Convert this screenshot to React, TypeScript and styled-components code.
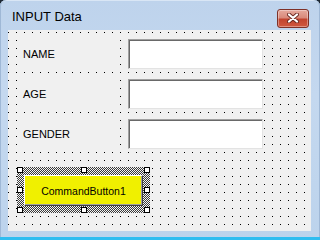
import { Fragment } from "react";
import styled, { createGlobalStyle } from "styled-components";

const GlobalStyle = createGlobalStyle`
  html, body {
    margin: 0;
    width: 320px;
    height: 240px;
    overflow: hidden;
    background: #1d2733;
  }
`;

const Window = styled.div`
  width: 320px;
  height: 240px;
  display: flex;
  flex-direction: column;
  border-radius: 6px 6px 0 0;
  background: linear-gradient(to bottom, #bed3ec 0%, #c4d8ef 40%, #bcd3ec 100%);
  box-shadow: inset 1px 0 #9fb8d6, inset -1px 0 #9fb8d6, inset 0 1px #d9e6f5;
  overflow: hidden;
`;

const TitleBar = styled.header`
  height: 30px;
  display: flex;
  align-items: center;
  justify-content: space-between;
  padding: 0 11px 0 12px;
  box-sizing: border-box;
`;

const Title = styled.span`
  font-family: "Liberation Sans", Arial, sans-serif;
  font-size: 13px;
  color: #000;
  padding-top: 3px;
`;

const CloseButton = styled.div`
  width: 32px;
  height: 19px;
  margin-top: 6px;
  box-sizing: border-box;
  display: flex;
  align-items: center;
  justify-content: center;
  border: 1px solid #7e3128;
  border-radius: 3px;
  background: linear-gradient(to bottom, #e6a99d 0%, #d98a7b 45%, #c2442f 55%, #d0583f 100%);
  box-shadow: inset 0 0 0 1px rgba(255, 255, 255, 0.35);
`;

const Middle = styled.div`
  display: flex;
  padding: 0 9px 0 8px;
`;

const Client = styled.div`
  position: relative;
  flex: 1;
  height: 201px;
  background: #f0f0f0;

  &::before {
    content: "";
    position: absolute;
    inset: 0;
    background: linear-gradient(to right, #000 1px, transparent 1px) 0 0 / 8px 8px;
    -webkit-mask: linear-gradient(to bottom, #000 1px, transparent 1px) 0 2px / 8px 8px;
    mask: linear-gradient(to bottom, #000 1px, transparent 1px) 0 2px / 8px 8px;
  }
`;

const Form = styled.div`
  position: relative;
  display: flex;
  flex-direction: column;
  align-items: flex-start;
  padding: 8px 0 0 12px;
`;

const Fields = styled.div`
  display: grid;
  grid-template-columns: 98px 135px;
  column-gap: 10px;
  row-gap: 8px;
  align-items: center;
`;

const FieldLabel = styled.div`
  height: 32px;
  display: flex;
  align-items: center;
  padding-left: 3px;
  background: #f0f0f0;
  font-family: "Liberation Sans", Tahoma, sans-serif;
  font-size: 11px;
  color: #000;
`;

const TextBox = styled.div`
  height: 30px;
  box-sizing: border-box;
  background: #fff;
  border: 1px solid;
  border-color: #a0a0a0 #e3e3e3 #e3e3e3 #a0a0a0;
  box-shadow: inset 1px 1px #696969;
`;

const Selection = styled.div`
  position: relative;
  margin: 17px 0 0 -3px;
  padding: 8px 7px 7px 7px;
  background: repeating-conic-gradient(#3a3a3a 0 25%, #f4f4f4 0 50%) 0 0 / 2px 2px;
`;

const CommandButton = styled.div`
  width: 119px;
  height: 31px;
  box-sizing: border-box;
  display: flex;
  align-items: center;
  justify-content: center;
  background: #f0f000;
  border: 1px solid;
  border-color: #fff #404040 #404040 #fff;
  box-shadow: inset -1px -1px #a0a0a0;
  font-family: "Liberation Sans", Tahoma, sans-serif;
  font-size: 10.5px;
  color: #000;
`;

type Place = "start" | "mid" | "end";

const Handle = styled.span<{ $x: Place; $y: Place }>`
  position: absolute;
  width: 6px;
  height: 6px;
  box-sizing: border-box;
  background: #fff;
  border: 1px solid #000;
  left: ${({ $x }) => ($x === "start" ? "0" : $x === "mid" ? "calc(50% - 3px)" : "calc(100% - 6px)")};
  top: ${({ $y }) => ($y === "start" ? "0" : $y === "mid" ? "calc(50% - 3px)" : "calc(100% - 6px)")};
`;

const BottomBorder = styled.div`
  height: 6px;
  margin-top: auto;
`;

const Taskbar = styled.div`
  height: 3px;
  background: #2fbdf0;
`;

const handles: [Place, Place][] = [
  ["start", "start"], ["mid", "start"], ["end", "start"],
  ["start", "mid"], ["end", "mid"],
  ["start", "end"], ["mid", "end"], ["end", "end"],
];

const fields = ["NAME", "AGE", "GENDER"];

export default function App() {
  return (
    <>
      <GlobalStyle />
      <Window>
        <TitleBar>
          <Title>INPUT Data</Title>
          <CloseButton>
            <svg width="12" height="10" viewBox="0 0 12 10">
              <path d="M2 1.5 L10 8.5 M10 1.5 L2 8.5" stroke="#6b2a22" strokeWidth="4" strokeLinecap="round" />
              <path d="M2 1.5 L10 8.5 M10 1.5 L2 8.5" stroke="#fff" strokeWidth="2.2" strokeLinecap="round" />
            </svg>
          </CloseButton>
        </TitleBar>
        <Middle>
          <Client>
            <Form>
              <Fields>
                {fields.map((f) => (
                  <Fragment key={f}>
                    <FieldLabel>{f}</FieldLabel>
                    <TextBox />
                  </Fragment>
                ))}
              </Fields>
              <Selection>
                <CommandButton>CommandButton1</CommandButton>
                {handles.map(([x, y]) => (
                  <Handle key={x + y} $x={x} $y={y} />
                ))}
              </Selection>
            </Form>
          </Client>
        </Middle>
        <BottomBorder />
        <Taskbar />
      </Window>
    </>
  );
}
